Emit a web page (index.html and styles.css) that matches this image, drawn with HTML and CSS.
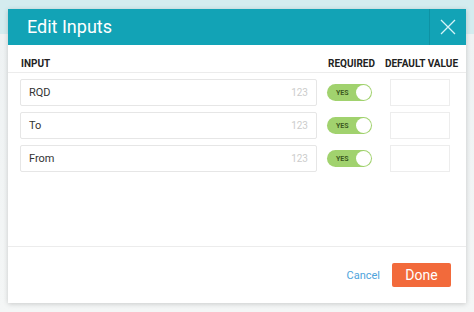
FILE: index.html
```html
<!DOCTYPE html>
<html lang="en">
  <head>
    <meta charset="UTF-8" />
    <title>Edit Inputs</title>
    <link rel="stylesheet" href="styles.css">
  </head>
  <body>
    <div class="backdrop">
      <div class="modal">
        <div class="modal_head">
          <h2 class="modal_title">Edit Inputs</h2>
          <button class="close_btn" type="button">
            <svg width="16" height="16" viewBox="0 0 16 16">
              <path d="M1 1 L15 15 M15 1 L1 15" stroke="#d6f4f8" stroke-width="1.3" fill="none" />
            </svg>
          </button>
        </div>
        <div class="modal_body">
          <div class="row head_row">
            <div class="col_input">INPUT</div>
            <div class="col_req">REQUIRED</div>
            <div class="col_def">DEFAULT VALUE</div>
          </div>
          <div class="row">
            <div class="col_input field"><span>RQD</span><span class="num">123</span></div>
            <div class="col_req"><div class="toggle"><span>YES</span><i class="knob"></i></div></div>
            <div class="col_def"><div class="def_box"></div></div>
          </div>
          <div class="row">
            <div class="col_input field"><span>To</span><span class="num">123</span></div>
            <div class="col_req"><div class="toggle"><span>YES</span><i class="knob"></i></div></div>
            <div class="col_def"><div class="def_box"></div></div>
          </div>
          <div class="row">
            <div class="col_input field"><span>From</span><span class="num">123</span></div>
            <div class="col_req"><div class="toggle"><span>YES</span><i class="knob"></i></div></div>
            <div class="col_def"><div class="def_box"></div></div>
          </div>
        </div>
        <div class="modal_foot">
          <a class="cancel" href="#">Cancel</a>
          <button class="done_btn" type="button">Done</button>
        </div>
      </div>
    </div>
  </body>
</html>
```
FILE: styles.css
```css
html, body {
  margin: 0;
  padding: 0;
}
body {
  width: 474px;
  height: 312px;
  overflow: hidden;
  font-family: Roboto, "Liberation Sans", Arial, sans-serif;
  background: linear-gradient(#d4ecef 0, #d4ecef 34px, #eef2f3 34px, #f4f6f6 100%);
}
.backdrop {
  padding: 9px 8px 0 8px;
}
.modal {
  width: 458px;
  height: 294px;
  background: #ffffff;
  box-shadow: 0 1px 5px rgba(0, 0, 0, 0.18);
  display: flex;
  flex-direction: column;
}
.modal_head {
  height: 36px;
  background: #12a3b6;
  display: flex;
  align-items: stretch;
}
.modal_title {
  flex: 1;
  margin: 0;
  padding: 0 0 0 19px;
  font-size: 18px;
  font-weight: 400;
  line-height: 36px;
  color: #ffffff;
}
.close_btn {
  width: 37px;
  border: none;
  border-left: 1px solid #0e92a4;
  background: #12a3b6;
  padding: 0;
  display: flex;
  align-items: center;
  justify-content: center;
}
.modal_body {
  flex: 1;
  padding: 0 8px 0 12px;
  border-bottom: 1px solid #ececec;
}
.row {
  display: flex;
  align-items: center;
  height: 27px;
  margin-bottom: 6px;
}
.head_row {
  height: 27px;
  margin: 0 -8px 6px -12px;
  padding: 0 8px 0 13px;
  border-bottom: 1px solid #ececec;
  font-size: 10px;
  font-weight: 700;
  color: #222222;
  align-items: flex-end;
  white-space: nowrap;
}
.head_row > div {
  padding-bottom: 3px;
}
.col_input {
  width: 297px;
}
.col_req {
  width: 63px;
  padding-left: 10px;
}
.col_def {
  width: 60px;
}
.head_row .col_req {
  padding-left: 10px;
  width: 57px;
}
.head_row .col_def {
  width: 70px;
}
.field {
  box-sizing: border-box;
  height: 27px;
  border: 1px solid #e6e6e6;
  border-radius: 2px;
  display: flex;
  align-items: center;
  justify-content: space-between;
  padding: 0 8px 0 8px;
  font-size: 11px;
  color: #333333;
}
.num {
  color: #cccccc;
  font-size: 10px;
}
.toggle {
  width: 45px;
  height: 17px;
  border-radius: 9px;
  background: #a1d26e;
  display: flex;
  align-items: center;
  justify-content: space-between;
  padding: 0 1px 0 9px;
  box-sizing: border-box;
}
.toggle span {
  font-size: 7px;
  font-weight: 700;
  color: #3d5a22;
}
.knob {
  width: 15px;
  height: 15px;
  border-radius: 50%;
  background: #ffffff;
}
.def_box {
  box-sizing: border-box;
  width: 60px;
  height: 27px;
  border: 1px solid #ededed;
}
.modal_foot {
  height: 56px;
  display: flex;
  align-items: center;
  justify-content: flex-end;
  padding-right: 15px;
}
.cancel {
  font-size: 11px;
  color: #4ea4dc;
  text-decoration: none;
  margin-right: 12px;
}
.done_btn {
  width: 59px;
  height: 24px;
  border: none;
  border-radius: 2px;
  background: #f26a3b;
  color: #ffffff;
  font-family: Roboto, "Liberation Sans", Arial, sans-serif;
  font-size: 14px;
  padding: 0;
}
```
